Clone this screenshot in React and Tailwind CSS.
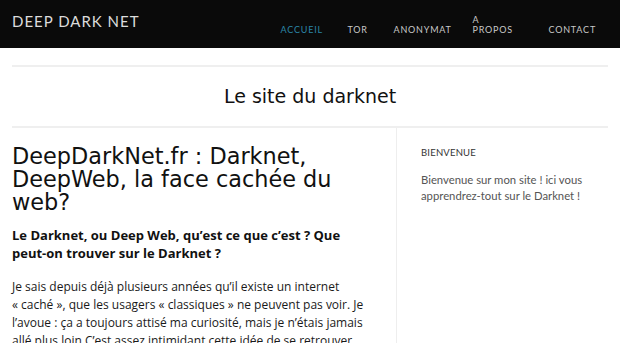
import React from 'react';

const navItems = [
  { label: 'ACCUEIL', width: 'w-[67px]', active: true },
  { label: 'TOR', width: 'w-[46px]' },
  { label: 'ANONYMAT', width: 'w-[79px]' },
];

const App = () => {
  return (
    <div className="min-h-screen bg-white" style={{ fontFamily: '"DejaVu Sans", sans-serif' }}>
      {/* Header */}
      <header className="h-[48px] bg-[#0a0a0a] flex items-start justify-between pl-[12px] pr-[24px]">
        <div
          className="pt-[10px] text-[15px] tracking-[1px] text-[#dcdcdc]"
          style={{ fontFamily: 'Lato, sans-serif' }}
        >
          DEEP DARK NET
        </div>
        <nav
          className="flex items-end pt-[15px] text-[9px] tracking-[0.8px] leading-[10px]"
          style={{ fontFamily: 'Lato, sans-serif' }}
        >
          {navItems.map((item) => (
            <a key={item.label} className={`${item.width} ${item.active ? 'text-[#2a86a8]' : 'text-[#c8c8c8]'}`}>
              {item.label}
            </a>
          ))}
          <div className="w-[76px]">
            <a className="block w-[42px] text-[#c8c8c8]">A PROPOS</a>
          </div>
          <a className="text-[#c8c8c8]">CONTACT</a>
        </nav>
      </header>

      {/* Title band */}
      <div className="mx-[12px] mt-[17px] border-t-2 border-b-2 border-[#efefef] h-[63px] flex items-center justify-center">
        <h2 className="text-[19px] text-[#111]">Le site du darknet</h2>
      </div>

      {/* Main */}
      <div className="mx-[12px] flex">
        <main className="w-[385px] pr-[24px] border-r border-[#eeeeee]">
          <h1 className="mt-[17px] text-[22.4px] leading-[23px] text-[#111]">
            DeepDarkNet.fr : Darknet, DeepWeb, la face cachée du web?
          </h1>
          <p
            className="mt-[12px] text-[13px] leading-[18px] font-bold text-[#111]"
            style={{ fontFamily: '"Open Sans", sans-serif' }}
          >
            Le Darknet, ou Deep Web, qu’est ce que c’est{'\u00a0'}? Que peut-on trouver sur le Darknet{'\u00a0'}?
          </p>
          <p
            className="mt-[16px] text-[12px] leading-[18px] text-[#1a1a1a]"
            style={{ fontFamily: '"Open Sans", sans-serif' }}
          >
            Je sais depuis déjà plusieurs années qu’il existe un internet «{'\u00a0'}caché{'\u00a0'}», que les usagers «{'\u00a0'}classiques{'\u00a0'}» ne peuvent pas voir. Je l’avoue{'\u00a0'}: ça a toujours attisé ma curiosité, mais je n’étais jamais allé plus loin C’est assez intimidant cette idée de se retrouver
          </p>
        </main>
        <aside className="flex-1 pl-[24px] pt-[18px]" style={{ fontFamily: 'Lato, sans-serif' }}>
          <h3 className="text-[9.5px] tracking-[0.2px] text-[#333]">BIENVENUE</h3>
          <p className="mt-[12px] text-[11.3px] leading-[16px] text-[#555]">
            Bienvenue sur mon site ! ici vous apprendrez-tout sur le Darknet !
          </p>
        </aside>
      </div>
    </div>
  );
};

export default App;
